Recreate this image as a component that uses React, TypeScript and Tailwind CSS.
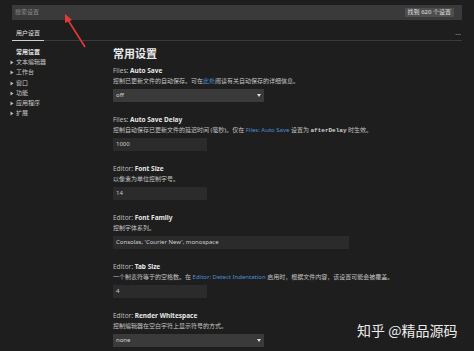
import React from 'react';

const FONT = "font-['Noto_Sans','Noto_Sans_CJK_SC',sans-serif]";

const navItems = ['文本编辑器', '工作台', '窗口', '功能', '应用程序', '扩展'];

function Caret() {
  return (
    <svg width="4" height="5" viewBox="0 0 4 5" className="absolute left-[-6px] top-[3px]">
      <path d="M0.5 0.5 L3.5 2.5 L0.5 4.5 Z" fill="#bbbbbb" />
    </svg>
  );
}

function Title({ group, name }: { group: string; name: string }) {
  return (
    <div className="h-[10px] leading-[10px] text-[6.5px] text-[#bdbdbd] whitespace-nowrap">
      {group}: <span className="font-bold text-[#e6e6e6]">{name}</span>
    </div>
  );
}

function Desc({ children }: { children: React.ReactNode }) {
  return <div className="h-[10px] leading-[10px] text-[6px] text-[#c4c4c4] whitespace-nowrap">{children}</div>;
}

function Link({ children }: { children: React.ReactNode }) {
  return <span className="text-[#4b8fd4]">{children}</span>;
}

function Input({ value, w }: { value: string; w: string }) {
  return (
    <div className={`mt-[3px] h-[13px] ${w} bg-[#2b2b2b] flex items-center pl-[3px] text-[6px] text-[#cfcfcf]`}>
      {value}
    </div>
  );
}

function Select({ value }: { value: string }) {
  return (
    <div className="mt-[3px] h-[13px] w-[151px] bg-[#3a3a3a] flex items-center justify-between pl-[3px] pr-[3px] text-[6px] text-[#d4d4d4]">
      <span>{value}</span>
      <svg width="4" height="3" viewBox="0 0 4 3">
        <path d="M0 0 L4 0 L2 3 Z" fill="#dddddd" />
      </svg>
    </div>
  );
}

function Block({ children }: { children: React.ReactNode }) {
  return <div className="h-[49px]">{children}</div>;
}

export default function App() {
  return (
    <div className={`w-[474px] h-[351px] bg-[#1e1e1e] overflow-hidden relative ${FONT}`}>
      {/* search */}
      <div className="pt-[5px] pl-[12px] pr-[12px]">
        <div className="h-[15px] bg-[#3a3a3a] flex items-center justify-between pl-[3px] pr-[8px]">
          <span className="text-[6px] text-[#8c8c8c]">搜索设置</span>
          <span className="h-[9px] leading-[9px] px-[3px] bg-[#4e4e4e] text-[6px] text-[#e0e0e0]">找到 620 个设置</span>
        </div>
      </div>

      {/* tabs */}
      <div className="mt-[6px] ml-[12px] mr-[12px] h-[15px] border-b border-[#3a3a3a] flex justify-between">
        <div className="px-[4px] h-[15px] leading-[14px] text-[6px] text-[#e6e6e6] border-b border-[#d0d0d0]">用户设置</div>
        <div className="text-[7px] leading-[14px] text-[#a0a0a0] pr-[1px]">...</div>
      </div>

      {/* body */}
      <div className="flex">
        <div className="w-[113px] shrink-0 pl-[16px] pt-[6px]">
          <div className="leading-[10.2px] text-[6px] font-bold text-[#e6e6e6]">常用设置</div>
          {navItems.map(item => (
            <div key={item} className="relative leading-[10.2px] text-[6px] text-[#c8c8c8]">
              <Caret />
              {item}
            </div>
          ))}
        </div>

        <div className="flex-1 pt-[6px]">
          <div className="h-[14px] leading-[14px] text-[11px] font-bold text-[#e8e8e8]">常用设置</div>
          <div className="mt-[5px]">
            <Block>
              <Title group="Files" name="Auto Save" />
              <Desc>
                控制已更新文件的自动保存。可在<Link>此处</Link>阅读有关自动保存的详细信息。
              </Desc>
              <Select value="off" />
            </Block>
            <Block>
              <Title group="Files" name="Auto Save Delay" />
              <Desc>
                控制自动保存已更新文件的延迟时间 (毫秒)。仅在 <Link>Files: Auto Save</Link> 设置为{' '}
                <span className="font-['Liberation_Mono',monospace] font-bold text-[#d0d0d0]">afterDelay</span> 时生效。
              </Desc>
              <Input value="1000" w="w-[94px]" />
            </Block>
            <Block>
              <Title group="Editor" name="Font Size" />
              <Desc>以像素为单位控制字号。</Desc>
              <Input value="14" w="w-[94px]" />
            </Block>
            <Block>
              <Title group="Editor" name="Font Family" />
              <Desc>控制字体系列。</Desc>
              <Input value="Consolas, 'Courier New', monospace" w="w-[236px]" />
            </Block>
            <Block>
              <Title group="Editor" name="Tab Size" />
              <Desc>
                一个制表符等于的空格数。在 <Link>Editor: Detect Indentation</Link> 启用时，根据文件内容，该设置可能会被覆盖。
              </Desc>
              <Input value="4" w="w-[94px]" />
            </Block>
            <Block>
              <Title group="Editor" name="Render Whitespace" />
              <Desc>控制编辑器在空白字符上显示符号的方式。</Desc>
              <Select value="none" />
            </Block>
          </div>
        </div>
      </div>

      {/* red arrow annotation */}
      <svg className="absolute left-0 top-0" width="100" height="60" viewBox="0 0 100 60">
        <line x1="85" y1="47" x2="68" y2="20" stroke="#e53935" strokeWidth="1.6" />
        <path d="M65 14 L72 20 L65 23 Z" fill="#e53935" />
      </svg>

      {/* watermark */}
      <div className="absolute left-[357px] top-[321px] text-[14px] leading-[18px] text-[#ececec] font-['Noto_Sans_CJK_SC',sans-serif] whitespace-nowrap">
        知乎 @精品源码
      </div>
    </div>
  );
}
